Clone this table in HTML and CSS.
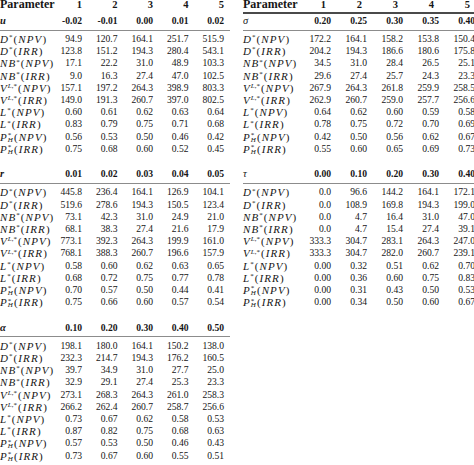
FILE: index.html
```html
<!DOCTYPE html>
<html>
<head>
<meta charset="utf-8">
<link rel="stylesheet" href="styles.css">
</head>
<body>
<div class="page">
  <div class="col col-left">
    <table class="tbl tbl-left first-block">
      <colgroup><col class="c-lbl"><col class="c-num"><col class="c-num"><col class="c-num"><col class="c-num"><col class="c-num"></colgroup>
      <thead>
        <tr class="top"><th class="lbl">Parameter</th><th>1</th><th>2</th><th>3</th><th>4</th><th>5</th></tr>
        <tr class="head"><th class="lbl"><i class="bi">u</i></th><th>-0.02</th><th>-0.01</th><th>0.00</th><th>0.01</th><th>0.02</th></tr>
      </thead>
      <tbody>
        <tr><td class="lbl"><i>D</i><sup>*</sup>(<i>NPV</i>)</td><td>94.9</td><td>120.7</td><td>164.1</td><td>251.7</td><td>515.9</td></tr>
        <tr><td class="lbl"><i>D</i><sup>*</sup>(<i>IRR</i>)</td><td>123.8</td><td>151.2</td><td>194.3</td><td>280.4</td><td>543.1</td></tr>
        <tr><td class="lbl"><i>NB</i><sup>*</sup>(<i>NPV</i>)</td><td>17.1</td><td>22.2</td><td>31.0</td><td>48.9</td><td>103.3</td></tr>
        <tr><td class="lbl"><i>NB</i><sup>*</sup>(<i>IRR</i>)</td><td>9.0</td><td>16.3</td><td>27.4</td><td>47.0</td><td>102.5</td></tr>
        <tr><td class="lbl"><i>V</i><sup><i>L</i>,*</sup>(<i>NPV</i>)</td><td>157.1</td><td>197.2</td><td>264.3</td><td>398.9</td><td>803.3</td></tr>
        <tr><td class="lbl"><i>V</i><sup><i>L</i>,*</sup>(<i>IRR</i>)</td><td>149.0</td><td>191.3</td><td>260.7</td><td>397.0</td><td>802.5</td></tr>
        <tr><td class="lbl"><i>L</i><sup>*</sup>(<i>NPV</i>)</td><td>0.60</td><td>0.61</td><td>0.62</td><td>0.63</td><td>0.64</td></tr>
        <tr><td class="lbl"><i>L</i><sup>*</sup>(<i>IRR</i>)</td><td>0.83</td><td>0.79</td><td>0.75</td><td>0.71</td><td>0.68</td></tr>
        <tr><td class="lbl"><i>P</i><span class="ss"><span>*</span><i>H</i></span>(<i>NPV</i>)</td><td>0.56</td><td>0.53</td><td>0.50</td><td>0.46</td><td>0.42</td></tr>
        <tr><td class="lbl"><i>P</i><span class="ss"><span>*</span><i>H</i></span>(<i>IRR</i>)</td><td>0.75</td><td>0.68</td><td>0.60</td><td>0.52</td><td>0.45</td></tr>
      </tbody>
    </table>

    <table class="tbl tbl-left">
      <colgroup><col class="c-lbl"><col class="c-num"><col class="c-num"><col class="c-num"><col class="c-num"><col class="c-num"></colgroup>
      <thead>
        <tr class="head"><th class="lbl"><i class="bi">r</i></th><th>0.01</th><th>0.02</th><th>0.03</th><th>0.04</th><th>0.05</th></tr>
      </thead>
      <tbody>
        <tr><td class="lbl"><i>D</i><sup>*</sup>(<i>NPV</i>)</td><td>445.8</td><td>236.4</td><td>164.1</td><td>126.9</td><td>104.1</td></tr>
        <tr><td class="lbl"><i>D</i><sup>*</sup>(<i>IRR</i>)</td><td>519.6</td><td>278.6</td><td>194.3</td><td>150.5</td><td>123.4</td></tr>
        <tr><td class="lbl"><i>NB</i><sup>*</sup>(<i>NPV</i>)</td><td>73.1</td><td>42.3</td><td>31.0</td><td>24.9</td><td>21.0</td></tr>
        <tr><td class="lbl"><i>NB</i><sup>*</sup>(<i>IRR</i>)</td><td>68.1</td><td>38.3</td><td>27.4</td><td>21.6</td><td>17.9</td></tr>
        <tr><td class="lbl"><i>V</i><sup><i>L</i>,*</sup>(<i>NPV</i>)</td><td>773.1</td><td>392.3</td><td>264.3</td><td>199.9</td><td>161.0</td></tr>
        <tr><td class="lbl"><i>V</i><sup><i>L</i>,*</sup>(<i>IRR</i>)</td><td>768.1</td><td>388.3</td><td>260.7</td><td>196.6</td><td>157.9</td></tr>
        <tr><td class="lbl"><i>L</i><sup>*</sup>(<i>NPV</i>)</td><td>0.58</td><td>0.60</td><td>0.62</td><td>0.63</td><td>0.65</td></tr>
        <tr><td class="lbl"><i>L</i><sup>*</sup>(<i>IRR</i>)</td><td>0.68</td><td>0.72</td><td>0.75</td><td>0.77</td><td>0.78</td></tr>
        <tr><td class="lbl"><i>P</i><span class="ss"><span>*</span><i>H</i></span>(<i>NPV</i>)</td><td>0.70</td><td>0.57</td><td>0.50</td><td>0.44</td><td>0.41</td></tr>
        <tr><td class="lbl"><i>P</i><span class="ss"><span>*</span><i>H</i></span>(<i>IRR</i>)</td><td>0.75</td><td>0.66</td><td>0.60</td><td>0.57</td><td>0.54</td></tr>
      </tbody>
    </table>

    <table class="tbl tbl-left">
      <colgroup><col class="c-lbl"><col class="c-num"><col class="c-num"><col class="c-num"><col class="c-num"><col class="c-num"></colgroup>
      <thead>
        <tr class="head"><th class="lbl"><i class="bi">α</i></th><th>0.10</th><th>0.20</th><th>0.30</th><th>0.40</th><th>0.50</th></tr>
      </thead>
      <tbody>
        <tr><td class="lbl"><i>D</i><sup>*</sup>(<i>NPV</i>)</td><td>198.1</td><td>180.0</td><td>164.1</td><td>150.2</td><td>138.0</td></tr>
        <tr><td class="lbl"><i>D</i><sup>*</sup>(<i>IRR</i>)</td><td>232.3</td><td>214.7</td><td>194.3</td><td>176.2</td><td>160.5</td></tr>
        <tr><td class="lbl"><i>NB</i><sup>*</sup>(<i>NPV</i>)</td><td>39.7</td><td>34.9</td><td>31.0</td><td>27.7</td><td>25.0</td></tr>
        <tr><td class="lbl"><i>NB</i><sup>*</sup>(<i>IRR</i>)</td><td>32.9</td><td>29.1</td><td>27.4</td><td>25.3</td><td>23.3</td></tr>
        <tr><td class="lbl"><i>V</i><sup><i>L</i>,*</sup>(<i>NPV</i>)</td><td>273.1</td><td>268.3</td><td>264.3</td><td>261.0</td><td>258.3</td></tr>
        <tr><td class="lbl"><i>V</i><sup><i>L</i>,*</sup>(<i>IRR</i>)</td><td>266.2</td><td>262.4</td><td>260.7</td><td>258.7</td><td>256.6</td></tr>
        <tr><td class="lbl"><i>L</i><sup>*</sup>(<i>NPV</i>)</td><td>0.73</td><td>0.67</td><td>0.62</td><td>0.58</td><td>0.53</td></tr>
        <tr><td class="lbl"><i>L</i><sup>*</sup>(<i>IRR</i>)</td><td>0.87</td><td>0.82</td><td>0.75</td><td>0.68</td><td>0.63</td></tr>
        <tr><td class="lbl"><i>P</i><span class="ss"><span>*</span><i>H</i></span>(<i>NPV</i>)</td><td>0.57</td><td>0.53</td><td>0.50</td><td>0.46</td><td>0.43</td></tr>
        <tr><td class="lbl"><i>P</i><span class="ss"><span>*</span><i>H</i></span>(<i>IRR</i>)</td><td>0.73</td><td>0.67</td><td>0.60</td><td>0.55</td><td>0.51</td></tr>
      </tbody>
    </table>
  </div>

  <div class="col col-right">
    <table class="tbl tbl-right first-block">
      <colgroup><col class="c-lbl"><col class="c-num"><col class="c-num"><col class="c-num"><col class="c-num"><col class="c-num"></colgroup>
      <thead>
        <tr class="top"><th class="lbl">Parameter</th><th>1</th><th>2</th><th>3</th><th>4</th><th>5</th></tr>
        <tr class="head"><th class="lbl"><i class="gi">σ</i></th><th>0.20</th><th>0.25</th><th>0.30</th><th>0.35</th><th>0.40</th></tr>
      </thead>
      <tbody>
        <tr><td class="lbl"><i>D</i><sup>*</sup>(<i>NPV</i>)</td><td>172.2</td><td>164.1</td><td>158.2</td><td>153.8</td><td>150.4</td></tr>
        <tr><td class="lbl"><i>D</i><sup>*</sup>(<i>IRR</i>)</td><td>204.2</td><td>194.3</td><td>186.6</td><td>180.6</td><td>175.8</td></tr>
        <tr><td class="lbl"><i>NB</i><sup>*</sup>(<i>NPV</i>)</td><td>34.5</td><td>31.0</td><td>28.4</td><td>26.5</td><td>25.1</td></tr>
        <tr><td class="lbl"><i>NB</i><sup>*</sup>(<i>IRR</i>)</td><td>29.6</td><td>27.4</td><td>25.7</td><td>24.3</td><td>23.3</td></tr>
        <tr><td class="lbl"><i>V</i><sup><i>L</i>,*</sup>(<i>NPV</i>)</td><td>267.9</td><td>264.3</td><td>261.8</td><td>259.9</td><td>258.5</td></tr>
        <tr><td class="lbl"><i>V</i><sup><i>L</i>,*</sup>(<i>IRR</i>)</td><td>262.9</td><td>260.7</td><td>259.0</td><td>257.7</td><td>256.6</td></tr>
        <tr><td class="lbl"><i>L</i><sup>*</sup>(<i>NPV</i>)</td><td>0.64</td><td>0.62</td><td>0.60</td><td>0.59</td><td>0.58</td></tr>
        <tr><td class="lbl"><i>L</i><sup>*</sup>(<i>IRR</i>)</td><td>0.78</td><td>0.75</td><td>0.72</td><td>0.70</td><td>0.69</td></tr>
        <tr><td class="lbl"><i>P</i><span class="ss"><span>*</span><i>H</i></span>(<i>NPV</i>)</td><td>0.42</td><td>0.50</td><td>0.56</td><td>0.62</td><td>0.67</td></tr>
        <tr><td class="lbl"><i>P</i><span class="ss"><span>*</span><i>H</i></span>(<i>IRR</i>)</td><td>0.55</td><td>0.60</td><td>0.65</td><td>0.69</td><td>0.73</td></tr>
      </tbody>
    </table>

    <table class="tbl tbl-right">
      <colgroup><col class="c-lbl"><col class="c-num"><col class="c-num"><col class="c-num"><col class="c-num"><col class="c-num"></colgroup>
      <thead>
        <tr class="head"><th class="lbl"><i class="gi">τ</i></th><th>0.00</th><th>0.10</th><th>0.20</th><th>0.30</th><th>0.40</th></tr>
      </thead>
      <tbody>
        <tr><td class="lbl"><i>D</i><sup>*</sup>(<i>NPV</i>)</td><td>0.0</td><td>96.6</td><td>144.2</td><td>164.1</td><td>172.1</td></tr>
        <tr><td class="lbl"><i>D</i><sup>*</sup>(<i>IRR</i>)</td><td>0.0</td><td>108.9</td><td>169.8</td><td>194.3</td><td>199.0</td></tr>
        <tr><td class="lbl"><i>NB</i><sup>*</sup>(<i>NPV</i>)</td><td>0.0</td><td>4.7</td><td>16.4</td><td>31.0</td><td>47.0</td></tr>
        <tr><td class="lbl"><i>NB</i><sup>*</sup>(<i>IRR</i>)</td><td>0.0</td><td>4.7</td><td>15.4</td><td>27.4</td><td>39.1</td></tr>
        <tr><td class="lbl"><i>V</i><sup><i>L</i>,*</sup>(<i>NPV</i>)</td><td>333.3</td><td>304.7</td><td>283.1</td><td>264.3</td><td>247.0</td></tr>
        <tr><td class="lbl"><i>V</i><sup><i>L</i>,*</sup>(<i>IRR</i>)</td><td>333.3</td><td>304.7</td><td>282.0</td><td>260.7</td><td>239.1</td></tr>
        <tr><td class="lbl"><i>L</i><sup>*</sup>(<i>NPV</i>)</td><td>0.00</td><td>0.32</td><td>0.51</td><td>0.62</td><td>0.70</td></tr>
        <tr><td class="lbl"><i>L</i><sup>*</sup>(<i>IRR</i>)</td><td>0.00</td><td>0.36</td><td>0.60</td><td>0.75</td><td>0.83</td></tr>
        <tr><td class="lbl"><i>P</i><span class="ss"><span>*</span><i>H</i></span>(<i>NPV</i>)</td><td>0.00</td><td>0.31</td><td>0.43</td><td>0.50</td><td>0.53</td></tr>
        <tr><td class="lbl"><i>P</i><span class="ss"><span>*</span><i>H</i></span>(<i>IRR</i>)</td><td>0.00</td><td>0.34</td><td>0.50</td><td>0.60</td><td>0.67</td></tr>
      </tbody>
    </table>
  </div>
</div>
</body>
</html>
```

FILE: styles.css
```css
html, body {
  margin: 0;
  padding: 0;
  background: #ffffff;
  overflow: hidden;
}

body {
  font-family: "Liberation Serif", "Times New Roman", serif;
  font-size: 9.6px;
  color: #161616;
  width: 474px;
  height: 465px;
}

.page {
  display: flex;
  gap: 13px;
  align-items: flex-start;
}

.col {
  display: flex;
  flex-direction: column;
  gap: 13.4px;
  flex: none;
}

.col-left { width: 230px; }
.col-right { width: 238px; }

.tbl {
  border-collapse: separate;
  border-spacing: 0;
  table-layout: fixed;
}

.tbl-left { width: 230px; }
.tbl-right { width: 238px; }

.tbl-left .c-lbl { width: 52.5px; }
.tbl-left .c-num { width: 35.5px; }
.tbl-right .c-lbl { width: 58px; }
.tbl-right .c-num { width: 36px; }

.tbl th,
.tbl td {
  padding: 0 6px 0 0;
  line-height: 12.2px;
  text-align: right;
  white-space: nowrap;
  vertical-align: middle;
}

.tbl th { font-weight: bold; }

.tbl .lbl {
  text-align: left;
  padding: 0;
}

.tbl td.lbl {
  font-weight: normal;
  font-size: 11px;
  letter-spacing: 1.1px;
}

/* top "Parameter" row */
.tbl .top th {
  font-size: 10.5px;
  line-height: 9.4px;
  padding-bottom: 2.8px;
  border-bottom: 2px solid transparent;
}
.tbl .top th.lbl { font-size: 12px; }
.tbl-right .top th { border-bottom-color: #4a4a4a; }
.tbl-right .top th:not(.lbl) { padding-right: 11px; }

/* parameter value row */
.tbl .head th {
  padding-bottom: 2.4px;
  border-bottom: 1px solid #8c8c8c;
}
.tbl .head th.lbl { font-size: 10.5px; }
.first-block .head th { padding-top: 0.8px; }

.tbl tbody tr:first-child td { padding-top: 2.4px; }

.bi { font-weight: bold; font-style: italic; }
.gi { font-weight: normal; font-style: italic; }

sup {
  font-size: 7px;
  line-height: 0;
  letter-spacing: 0;
  vertical-align: 3.8px;
  margin-right: 1px;
}

/* stacked superscript * over subscript H */
.ss {
  display: inline-flex;
  flex-direction: column;
  font-size: 7px;
  line-height: 4.6px;
  letter-spacing: 0;
  vertical-align: 3.6px;
  margin-right: 1px;
}
```
